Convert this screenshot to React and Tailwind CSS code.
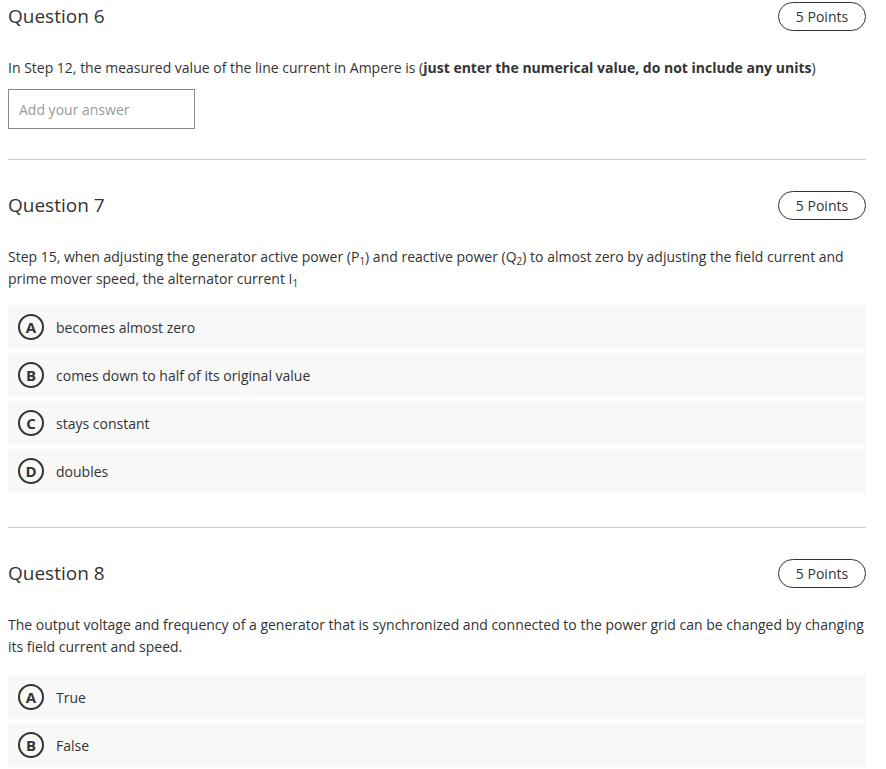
import React from 'react';

function Points() {
  return (
    <div className="h-[29px] w-[88px] rounded-full border border-[#333] flex items-center justify-center text-[14px] text-[#333]">
      5 Points
    </div>
  );
}

function Header({ n }) {
  return (
    <div className="flex items-center justify-between">
      <h2 className="text-[19px] text-[#333]">Question {n}</h2>
      <Points />
    </div>
  );
}

function Option({ letter, text }) {
  return (
    <div className="h-[44px] bg-[#f8f8f8] flex items-center pl-[10px]">
      <span className="shrink-0 size-[26px] min-w-[26px] rounded-full border-2 border-[#333] flex items-center justify-center text-[15px] leading-none font-bold text-[#333]">
        {letter}
      </span>
      <span className="ml-[12px] text-[14px] text-[#333]">{text}</span>
    </div>
  );
}

export default function App() {
  return (
    <div className="bg-white w-[886px] h-[769px] overflow-hidden pl-[8px] pr-[20px] pt-[2px] font-['Open_Sans',sans-serif] text-[#333]">
      {/* Question 6 */}
      <Header n={6} />
      <p className="mt-[26px] text-[14px] leading-[22px]">
        In Step 12, the measured value of the line current in Ampere is (<b className="font-bold">just enter the numerical value, do not include any units</b>)
      </p>
      <input
        type="text"
        placeholder="Add your answer"
        className="mt-[10px] w-[187px] h-[40px] border border-[#8a8a8a] px-[10px] text-[14px] placeholder:text-[#999] outline-none"
      />
      <div className="mt-[30px] border-t border-[#ccc]" />

      {/* Question 7 */}
      <div className="mt-[31px]">
        <Header n={7} />
      </div>
      <p className="mt-[26px] text-[14px] leading-[22px]">
        Step 15, when adjusting the generator active power (P<sub className="text-[10px] leading-none">1</sub>) and reactive power (Q<sub className="text-[10px] leading-none">2</sub>) to almost zero by adjusting the field current and prime mover speed, the alternator current I<sub className="text-[10px] leading-none">1</sub>
      </p>
      <div className="mt-[15px] flex flex-col gap-[4px]">
        <Option letter="A" text="becomes almost zero" />
        <Option letter="B" text="comes down to half of its original value" />
        <Option letter="C" text="stays constant" />
        <Option letter="D" text="doubles" />
      </div>
      <div className="mt-[34px] border-t border-[#ccc]" />

      {/* Question 8 */}
      <div className="mt-[31px]">
        <Header n={8} />
      </div>
      <p className="mt-[26px] text-[14px] leading-[22px]">
        The output voltage and frequency of a generator that is synchronized and connected to the power grid can be changed by changing its field current and speed.
      </p>
      <div className="mt-[17px] flex flex-col gap-[4px]">
        <Option letter="A" text="True" />
        <Option letter="B" text="False" />
      </div>
    </div>
  );
}
